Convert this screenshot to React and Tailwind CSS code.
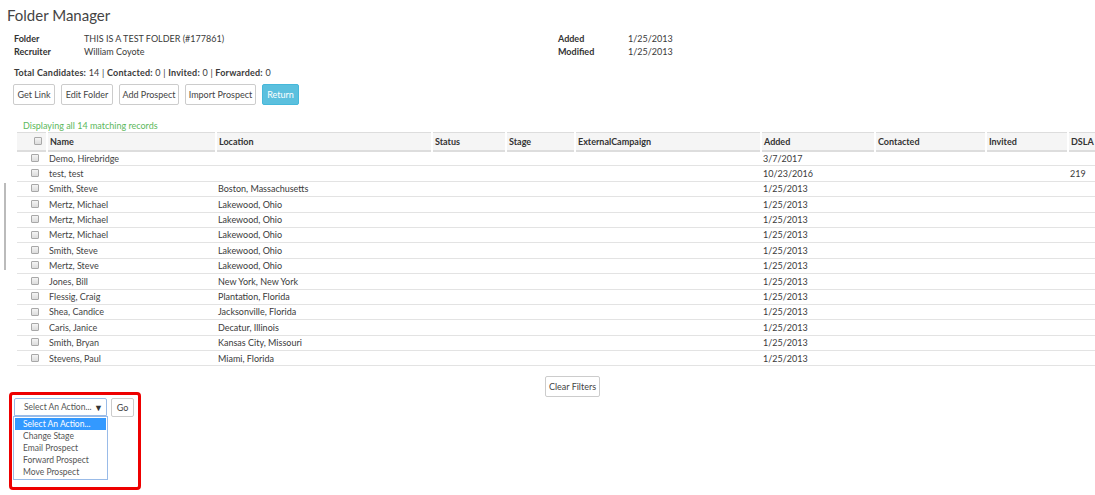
import React from 'react';

const rows = [
  { name: 'Demo, Hirebridge', location: '', added: '3/7/2017', dsla: '' },
  { name: 'test, test', location: '', added: '10/23/2016', dsla: '219' },
  { name: 'Smith, Steve', location: 'Boston, Massachusetts', added: '1/25/2013', dsla: '' },
  { name: 'Mertz, Michael', location: 'Lakewood, Ohio', added: '1/25/2013', dsla: '' },
  { name: 'Mertz, Michael', location: 'Lakewood, Ohio', added: '1/25/2013', dsla: '' },
  { name: 'Mertz, Michael', location: 'Lakewood, Ohio', added: '1/25/2013', dsla: '' },
  { name: 'Smith, Steve', location: 'Lakewood, Ohio', added: '1/25/2013', dsla: '' },
  { name: 'Mertz, Steve', location: 'Lakewood, Ohio', added: '1/25/2013', dsla: '' },
  { name: 'Jones, Bill', location: 'New York, New York', added: '1/25/2013', dsla: '' },
  { name: 'Flessig, Craig', location: 'Plantation, Florida', added: '1/25/2013', dsla: '' },
  { name: 'Shea, Candice', location: 'Jacksonville, Florida', added: '1/25/2013', dsla: '' },
  { name: 'Caris, Janice', location: 'Decatur, Illinois', added: '1/25/2013', dsla: '' },
  { name: 'Smith, Bryan', location: 'Kansas City, Missouri', added: '1/25/2013', dsla: '' },
  { name: 'Stevens, Paul', location: 'Miami, Florida', added: '1/25/2013', dsla: '' },
];

const columns = [
  { label: '', w: 'w-[30px]' },
  { label: 'Name', w: 'w-[169px]' },
  { label: 'Location', w: 'w-[216px]' },
  { label: 'Status', w: 'w-[74px]' },
  { label: 'Stage', w: 'w-[69px]' },
  { label: 'ExternalCampaign', w: 'w-[186px]' },
  { label: 'Added', w: 'w-[114px]' },
  { label: 'Contacted', w: 'w-[111px]' },
  { label: 'Invited', w: 'w-[82px]' },
  { label: 'DSLA', w: 'w-[27px]' },
];

const Checkbox = () => (
  <span className="inline-block w-[8px] h-[8px] border border-[#a8a8a8] rounded-[1px] bg-gradient-to-b from-[#f4f4f4] to-[#dcdcdc]" />
);

const Btn = ({ children, primary, w }) => (
  <button
    className={`${w} h-[21px] text-[9px] rounded-[2px] border ${
      primary ? 'bg-[#5bc0de] border-[#46b8da] text-white' : 'bg-white border-[#ccc] text-[#444]'
    }`}
  >
    {children}
  </button>
);

const App = () => {
  return (
    <div className="relative w-[1095px] h-[495px] bg-white text-[#3a3a3a] overflow-hidden" style={{ fontFamily: 'Lato, "Open Sans", sans-serif' }}>
      {/* stray scrollbar edge */}
      <div className="absolute left-[4px] top-[183px] w-[2px] h-[87px] bg-[#bbb]" />

      <div className="pl-[7px] pt-[6px]">
        <h1 className="text-[15px] leading-[18px] text-[#444]">Folder Manager</h1>
      </div>

      <div className="flex pl-[14px] pt-[8px] text-[9px] leading-[13px]">
        <div className="w-[544px] flex">
          <div className="w-[70px] font-bold text-[#333]">
            <div>Folder</div>
            <div>Recruiter</div>
          </div>
          <div>
            <div>THIS IS A TEST FOLDER (#177861)</div>
            <div>William Coyote</div>
          </div>
        </div>
        <div className="flex">
          <div className="w-[70px] font-bold text-[#333]">
            <div>Added</div>
            <div>Modified</div>
          </div>
          <div>
            <div>1/25/2013</div>
            <div>1/25/2013</div>
          </div>
        </div>
      </div>

      <div className="pl-[14px] pt-[8px] text-[9px] leading-[13px] tracking-[0.2px]">
        <b>Total Candidates:</b> 14 | <b>Contacted:</b> 0 | <b>Invited:</b> 0 | <b>Forwarded:</b> 0
      </div>

      <div className="flex gap-[6px] pl-[13px] pt-[5px]">
        <Btn w="w-[42px]">Get Link</Btn>
        <Btn w="w-[52px]">Edit Folder</Btn>
        <Btn w="w-[60px]">Add Prospect</Btn>
        <Btn w="w-[71px]">Import Prospect</Btn>
        <Btn w="w-[37px]" primary>Return</Btn>
      </div>

      <div className="pl-[23px] pt-[15px] text-[9px] leading-[12px] text-[#5cb85c]">Displaying all 14 matching records</div>

      <table className="ml-[17px] table-fixed border-collapse text-[9px] w-[1078px]">
        <thead>
          <tr className="h-[18px] bg-[#f5f5f5] border-t border-[#ddd] border-b-2 border-b-[#ddd]">
            {columns.map((c, i) => (
              <th
                key={i}
                className={`${c.w} p-0 pl-[2px] text-left font-bold text-[#333] ${i > 0 ? 'border-l-2 border-l-white' : ''}`}
              >
                {i === 0 ? (
                  <span className="flex justify-end pr-[4px]">
                    <Checkbox />
                  </span>
                ) : (
                  c.label
                )}
              </th>
            ))}
          </tr>
        </thead>
        <tbody>
          {rows.map((r, i) => (
            <tr key={i} className="h-[15.4px] border-b border-[#e3e3e3]">
              <td className="p-0 text-right pr-[8px] leading-[8px]">
                <Checkbox />
              </td>
              <td className="p-0 pl-[2px] text-[#444]">{r.name}</td>
              <td className="p-0 pl-[2px]">{r.location}</td>
              <td className="p-0" />
              <td className="p-0" />
              <td className="p-0" />
              <td className="p-0 pl-[2px]">{r.added}</td>
              <td className="p-0" />
              <td className="p-0" />
              <td className="p-0 pl-[2px]">{r.dsla}</td>
            </tr>
          ))}
        </tbody>
      </table>

      <div className="flex pl-[545px] pt-[10px]">
        <button className="h-[21px] w-[55px] text-[9px] bg-white border border-[#ccc] rounded-[2px] text-[#444]">Clear Filters</button>
      </div>

      <div className="ml-[9px] -mt-[5px] w-[132px] h-[98px] border-[3px] border-[#e00] rounded-[4px] pl-[2px] pt-[3px]">
        <div className="flex gap-[3px]">
          <div>
            <div className="w-[93px] h-[18px] border border-[#99bbe8] rounded-t-[2px] flex items-center justify-between pl-[9px] pr-[3px] text-[8.5px] text-[#555] bg-white">
              <span>Select An Action...</span>
              <span className="text-[9px] leading-[9px] text-[#333]">▼</span>
            </div>
            <div className="w-[95px] -ml-[1px] border border-[#99bbe8] text-[8.5px] leading-[12px] text-[#555] bg-white">
              <div className="bg-[#3399ff] text-white mt-[1px] mx-[1px] pl-[8px]">Select An Action...</div>
              <div className="pl-[9px]">Change Stage</div>
              <div className="pl-[9px]">Email Prospect</div>
              <div className="pl-[9px]">Forward Prospect</div>
              <div className="pl-[9px] pb-[1px]">Move Prospect</div>
            </div>
          </div>
          <button className="h-[19px] w-[23px] text-[9px] bg-white border border-[#ccc] rounded-[2px] text-[#444]">Go</button>
        </div>
      </div>
    </div>
  );
};

export default App;
